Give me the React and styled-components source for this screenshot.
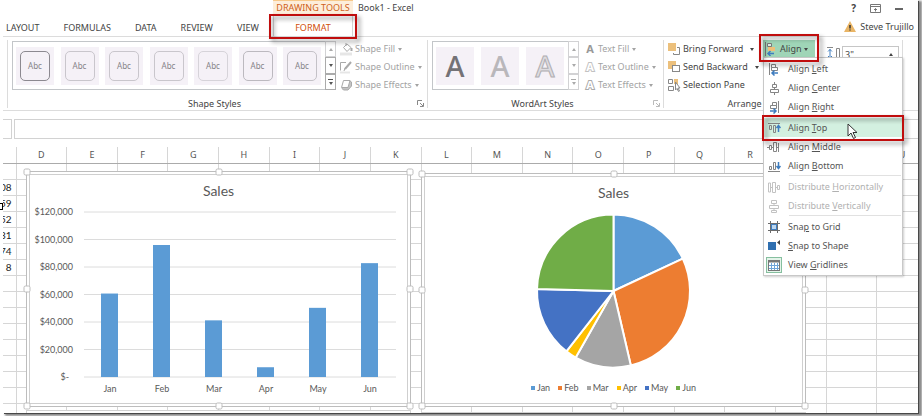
import React from 'react';
import styled, { createGlobalStyle, css } from 'styled-components';

// Data

const tabs = ['LAYOUT', 'FORMULAS', 'DATA', 'REVIEW', 'VIEW'];
const shapePresets = ['#8c8990', '#c9c6cc', '#c9c6cc', '#c9c6cc', '#d6d3d9', '#bcb9bf', '#c4c1c7'];
const columns = 'DEFGHIJKLMNOPQRSTU'.split('');
const rows = ['', '08', '59', '52', '31', '74', '8', '', '', '', '', '', '', '', '', ''];

const months = ['Jan', 'Feb', 'Mar', 'Apr', 'May', 'Jun'];
const sales = [60700, 96000, 41200, 7100, 50300, 82800];
const sliceEnds = [64.9, 166.9, 209.6, 218, 271.5, 360];
const palette = ['#5b9bd5', '#ed7d31', '#a5a5a5', '#ffc000', '#4472c4', '#70ad47'];

const menuItems = [
  { icon: 'left', text: ['Align ', 'L', 'eft'] },
  { icon: 'center', text: ['Align ', 'C', 'enter'] },
  { icon: 'right', text: ['Align ', 'R', 'ight'] },
  { icon: 'top', text: ['Align ', 'T', 'op'], split: true, active: true },
  { icon: 'middle', text: ['Align ', 'M', 'iddle'] },
  { icon: 'bottom', text: ['Align ', 'B', 'ottom'] },
  { icon: 'distH', text: ['Distribute ', 'H', 'orizontally'], split: true, disabled: true },
  { icon: 'distV', text: ['Distribute ', 'V', 'ertically'], disabled: true },
  { icon: 'grid', text: ['Sna', 'p', ' to Grid'], split: true },
  { icon: 'shape', text: ['', 'S', 'nap to Shape'] },
  { icon: 'lines', text: ['View ', 'G', 'ridlines'], checked: true },
];

// Icons

const gray = '#858585';
const blue = '#3f7dbf';

const glyphs = {
  left: (
    <g fill="none" stroke={gray}>
      <path d="M2.500 1v12M4.500 2.500h4v3h-4zM4.500 5.500h6v3h-6z" />
      <path d="M11 11H5m2.500-2.500L5 11l2.500 2.500" stroke={blue} strokeWidth="1.500" />
    </g>
  ),
  center: (
    <g fill="none" stroke={gray}>
      <path d="M7.500 1v2M7.500 6v2M7.500 12v2M5.500 3.500h4v3h-4zM3.500 8.500h8v3h-8z" />
    </g>
  ),
  right: (
    <g fill="none" stroke={gray}>
      <path d="M11.500 1v12M5.500 2.500h4v3h-4zM3.500 5.500h6v3h-6z" />
      <path d="M3 11h6M6.500 8.500L9 11l-2.500 2.500" stroke={blue} strokeWidth="1.500" />
    </g>
  ),
  top: (
    <g fill="none" stroke={gray}>
      <path d="M1 2.500h12M2.500 4.500h2v4h-2zM6.500 4.500h2v7h-2z" />
      <path d="M11.500 11V5M9.500 7l2-2.500 2 2.500" stroke={blue} strokeWidth="1.500" />
    </g>
  ),
  middle: (
    <g fill="none" stroke={gray}>
      <path d="M0 7.500h2M4.500 7.500h2M9.500 7.500h2M2.500 5.500h2v4h-2zM6.500 2.500h3v9h-3zM11.500 3v9" />
    </g>
  ),
  bottom: (
    <g fill="none" stroke={gray}>
      <path d="M1 12.500h12M2.500 7.500h2v3h-2zM6.500 3.500h2v7h-2z" />
      <path d="M11.500 3v6M9.500 7l2 2.500 2-2.500" stroke={blue} strokeWidth="1.500" />
    </g>
  ),
  distH: (
    <g fill="none" stroke="#c2c2c2">
      <path d="M1.500 3v9h2V3zM5.500 2.500h3v10h-3zM10.500 5.500h2v4h-2zM3 7.500h2M9 7.500h1" />
    </g>
  ),
  distV: (
    <g fill="none" stroke="#c2c2c2">
      <path d="M4.500 1.500h5v3h-5zM2.500 6.500h9v3h-9zM4.500 11.500h5v2h-5zM7 4.500v2M7 9.500v2" />
    </g>
  ),
  grid: (
    <g>
      <path d="M3.500 1v12M10.500 1v12M1 3.500h12M1 10.500h12" stroke="#6b6b6b" fill="none" />
      <rect x="4.500" y="4.500" width="5" height="5" fill="#bcd6ef" stroke={blue} />
    </g>
  ),
  shape: (
    <g>
      <rect x="1" y="3" width="8" height="8" fill="#2f6fb0" />
      <path d="M13 1v5l-3-2.500z" fill="#444" />
    </g>
  ),
  lines: (
    <g>
      <rect x="1.500" y="2.500" width="11" height="10" fill="#fff" stroke="#777" />
      <path d="M1 3.500h12" stroke="#777" strokeWidth="2" />
      <path d="M4.500 5v7M7.500 5v7M10.500 5v7M2 7.500h10M2 10.500h10" stroke="#6ea3d8" fill="none" />
    </g>
  ),
  align: (
    <g fill="none" stroke="#777">
      <path d="M1.500 0v14M3.500 1.500h4v3h-4z" fill="#dce9e0" />
      <path d="M4 5h7v4H4z" fill="#eebf79" stroke="none" />
      <path d="M10 11.500H4m2.500-2.500L4 11.500l2.500 2.500" stroke={blue} strokeWidth="1.500" />
    </g>
  ),
  forward: (
    <g>
      <path d="M9 5.500h2.500v7h-6V11" fill="none" stroke="#888" />
      <rect x="0" y="1" width="8" height="8" fill="#ecc07c" />
    </g>
  ),
  backward: (
    <g>
      <rect x="0" y="1" width="8" height="8" fill="#ecc07c" />
      <rect x="4.500" y="5.500" width="7" height="6" fill="#fff" stroke="#888" />
    </g>
  ),
  pane: (
    <g fill="none" stroke="#888">
      <path d="M.5 1.500h4v4h-4zM.5 8.500h5v4h-5z" />
      <path d="M6 1h4v5H6z" fill="#ecc07c" stroke="none" />
      <path d="M7.500 4v8l1.500-1.500 1.500 3 1-.5-1.500-3h2z" fill="#fff" />
    </g>
  ),
  fill: (
    <g fill="none" stroke="#a9a9a9">
      <path d="M3.500 5.500L7 2l4 3.500-4 4zM6 1v3" />
      <path d="M11.500 6v3" strokeWidth="2" />
      <path d="M0 12h12" strokeWidth="3" stroke="#e6e6e6" />
    </g>
  ),
  outline: (
    <g fill="none" stroke="#a9a9a9">
      <path d="M6 2.500H.5v8M4 11l1-3 6-6" />
      <path d="M5 9l6-7" strokeWidth="2" />
      <path d="M0 12.500h10" stroke="#e6e6e6" strokeWidth="2" />
    </g>
  ),
  effects: (
    <g fill="#c4c4c4" stroke="#a9a9a9">
      <path d="M2 10.500l1.500 1.500H8l3.500-4V4L10 3z" />
      <path d="M3.500 2.500H10L8 9.500H1.500z" fill="#fff" />
    </g>
  ),
  height: (
    <g fill="none" stroke="#888">
      <path d="M0 .5h6M0 12.500h6" />
      <path d="M3 2v9M1 4.500l2-2 2 2M1 9l2 2 2-2" stroke={blue} />
      <path d="M9.500 13V1.500h3V13" />
    </g>
  ),
};

const Icon = ({ name }) => (
  <svg width="14" height="14" viewBox="0 0 14 14" aria-hidden="true">{glyphs[name]}</svg>
);

const Launcher = ({ label }) => (
  <StyLauncher aria-label={label}>
    <svg width="7" height="7" viewBox="0 0 7 7">
      <path d="M.5 5V.5H5M3 3l3 3M6.500 3v3.500H3" fill="none" stroke="currentColor" />
    </svg>
  </StyLauncher>
);

const Scroller = ({ live }) => (
  <StyScroller>
    <StyStep aria-label="Previous row" $muted><StyCaret $up /></StyStep>
    <StyStep aria-label="Next row" $muted={!live} $framed={live}><StyCaret /></StyStep>
    <StyStep aria-label="More styles" $muted={!live} $framed={live}><StyBar /><StyCaret /></StyStep>
  </StyScroller>
);

const Command = ({ icon, letter, children, muted, arrow = true, wide }) => (
  <StyCommand $muted={muted} $wide={wide}>
    {letter ? <StyLetter $kind={letter}>A</StyLetter> : <Icon name={icon} />}
    <span>{children}</span>
    {arrow && <StyCaret />}
  </StyCommand>
);

// Charts

const handles = ['0 0', '50% 0', '100% 0', '0 50%', '100% 50%', '0 100%', '50% 100%', '100% 100%'];

const ChartObject = ({ title, low, children }) => (
  <StyChart $low={low}>
    <h2>{title}</h2>
    {children}
    {handles.map((at) => <StyHandle key={at} $at={at.split(' ')} />)}
  </StyChart>
);

const BarChart = () => {
  const base = 175;
  const step = 27.5;
  return (
    <StyPlot viewBox="0 0 379 196" role="img" aria-label="Sales by month, columns">
      {[0, 1, 2, 3, 4, 5, 6].map((n) => (
        <g key={n}>
          <line x1="55" x2="367" y1={base - n * step} y2={base - n * step} stroke="#dcdcdc" />
          <text x={n ? 44 : 40} y={base + 3 - n * step} textAnchor="end">
            {n ? `$${(n * 20000).toLocaleString('en-US')}` : '$-'}
          </text>
        </g>
      ))}
      {sales.map((value, n) => {
        const height = (value / 20000) * step;
        return (
          <g key={months[n]}>
            <rect x={72 + n * 52} y={base - height} width="17" height={height} fill={palette[0]} />
            <text x={81 + n * 52} y={base + 15} textAnchor="middle">{months[n]}</text>
          </g>
        );
      })}
    </StyPlot>
  );
};

const rim = (deg) => {
  const a = (deg * Math.PI) / 180;
  return `${189.5 + 76.5 * Math.sin(a)} ${87 - 76.5 * Math.cos(a)}`;
};

const PieChart = () => (
  <>
    <StyPlot viewBox="0 0 379 172" role="img" aria-label="Sales by month, pie">
      {sliceEnds.map((end, n) => {
        const start = n ? sliceEnds[n - 1] : 0;
        return (
          <path
            key={end}
            d={`M189.500 87L${rim(start)}A76.500 76.500 0 0 1 ${rim(end)}Z`}
            fill={palette[n]}
            stroke="#fff"
            strokeWidth="2"
            strokeLinejoin="round"
          />
        );
      })}
    </StyPlot>
    <StyLegend>
      {months.map((month, n) => <StyKey key={month} $color={palette[n]}>{month}</StyKey>)}
    </StyLegend>
  </>
);

const AlignMenu = () => (
  <StyMenu role="menu">
    {menuItems.map(({ icon, text, split, active, disabled, checked }) => (
      <React.Fragment key={icon}>
        {split && <StySplit />}
        <StyMenuItem role="menuitem" disabled={disabled} $active={active}>
          <StyMenuIcon $checked={checked}><Icon name={icon} /></StyMenuIcon>
          <span>{text[0]}<u>{text[1]}</u>{text[2]}</span>
          {active && (
            <StyPointer width="11" height="17" viewBox="0 0 11 17">
              <path d="M1 1v12l3-3 2.500 5.500 2-1L6 9.500h4z" fill="#fff" stroke="#333" />
            </StyPointer>
          )}
          {active && <StyCallout $x={-2} $y={-3} $bottom={-4} />}
        </StyMenuItem>
      </React.Fragment>
    ))}
  </StyMenu>
);

const App = () => (
  <StyPage>
    <Global />
    <StyWindow>
      <StyHeader>
        <span />
        <StyContext>DRAWING TOOLS</StyContext>
        <StyTitle>
          <h1>Book1 - Excel</h1>
          <StyControls>
            <button aria-label="Help"><b>?</b></button>
            <button aria-label="Ribbon display options">
              <svg width="11" height="9" viewBox="0 0 11 9">
                <path d="M.5.500h10v8H.5zM.5 2.500h10M5.500 7.500v-3M4 6l1.500-1.500L7 6" fill="none" stroke="#777" />
              </svg>
            </button>
            <button aria-label="Minimize">
              <svg width="8" height="9" viewBox="0 0 8 9"><path d="M0 5h8" stroke="#666" strokeWidth="2" /></svg>
            </button>
          </StyControls>
        </StyTitle>
        <StyTabs>
          {tabs.map((tab) => <button key={tab}>{tab}</button>)}
        </StyTabs>
        <StyFormatTab>
          FORMAT
          <StyCallout $x={-5} $y={-1} $bottom={-3} />
        </StyFormatTab>
        <StyUser>
          <svg width="12" height="11" viewBox="0 0 12 11">
            <path d="M6 0l6 11H0z" fill="#e9b566" />
            <path d="M6 4v3.500M6 8.500v1" stroke="#333" strokeWidth="1.500" />
          </svg>
          <span>Steve Trujillo</span>
        </StyUser>
      </StyHeader>

      <StyRibbon>
        <StyGroup $width={421}>
          <StyGroupBody>
            <StyGallery $width={324}>
              <StyPresets>
                {shapePresets.map((color, n) => (
                  <StyPreset key={n}><StyShape $color={color}>Abc</StyShape></StyPreset>
                ))}
              </StyPresets>
              <Scroller live />
            </StyGallery>
            <StyCommands>
              <Command icon="fill" muted>Shape Fill</Command>
              <Command icon="outline" muted>Shape Outline</Command>
              <Command icon="effects" muted>Shape Effects</Command>
            </StyCommands>
          </StyGroupBody>
          <StyGroupName><span>Shape Styles</span><Launcher label="Shape options" /></StyGroupName>
        </StyGroup>

        <StyGroup $width={236}>
          <StyGroupBody>
            <StyGallery $width={147}>
              <StyPresets>
                <StyPreset><StyWordArt $color="#747276">A</StyWordArt></StyPreset>
                <StyPreset><StyWordArt $color="#b9b7bb">A</StyWordArt></StyPreset>
                <StyPreset><StyWordArt $color="#dedce0" $edge="#b0aeb2">A</StyWordArt></StyPreset>
              </StyPresets>
              <Scroller />
            </StyGallery>
            <StyCommands>
              <Command letter="solid" muted>Text Fill</Command>
              <Command letter="soft" muted>Text Outline</Command>
              <Command letter="hollow" muted>Text Effects</Command>
            </StyCommands>
          </StyGroupBody>
          <StyGroupName $muted><span>WordArt Styles</span><Launcher label="WordArt options" /></StyGroupName>
        </StyGroup>

        <StyGroup $width={157} $plain>
          <StyGroupBody>
            <StyCommands>
              <Command icon="forward" wide>Bring Forward</Command>
              <Command icon="backward" wide>Send Backward</Command>
              <Command icon="pane" arrow={false}>Selection Pane</Command>
            </StyCommands>
            <StyAlign>
              <StyAlignButton aria-haspopup="menu" aria-expanded="true">
                <Icon name="align" />
                <span>Align</span>
                <StyCaret />
              </StyAlignButton>
              <AlignMenu />
              <StyCallout $x={-4} $y={-6} $bottom={-4} />
            </StyAlign>
          </StyGroupBody>
          <StyGroupName><span>Arrange</span></StyGroupName>
        </StyGroup>

        <StyGroup $width={82}>
          <StySize>
            <Icon name="height" />
            <input aria-label="Shape height" defaultValue={'3"'} />
            <StyCaret $up />
          </StySize>
        </StyGroup>
      </StyRibbon>

      <StyFormula>
        <StyNameBox />
        <input aria-label="Formula bar" />
      </StyFormula>

      <StySheet>
        <table>
          <thead>
            <tr><th />{columns.map((name) => <th key={name}>{name}</th>)}</tr>
          </thead>
          <tbody>
            {rows.map((value, n) => (
              <tr key={n}>
                <td><StyValue>{value}</StyValue></td>
                {columns.map((name) => <td key={name} />)}
              </tr>
            ))}
          </tbody>
        </table>
        <StyObjects>
          <ChartObject title="Sales"><BarChart /></ChartObject>
          <ChartObject title="Sales" low><PieChart /></ChartObject>
          <StyNextChart />
          <StyNextChart $low />
        </StyObjects>
      </StySheet>
    </StyWindow>
    <StyFillHandle />
  </StyPage>
);

// Styles

const Global = createGlobalStyle`
  * { box-sizing: border-box; }

  body {
    margin: 0;
    background: #fff;
    color: #444;
    font: 9px/12px "Noto Sans", "Open Sans", sans-serif;
  }

  button, input {
    margin: 0;
    padding: 0;
    border: 0;
    background: none;
    color: inherit;
    font: inherit;
  }

  h1, h2 { margin: 0; font-weight: 400; }

  svg { flex: none; display: block; }
`;

const StyPage = styled.div`
  position: relative;
  height: 100vh;
  padding: 0 4px 3px 3px;
  overflow: hidden;
`;

const StyWindow = styled.div`
  display: flex;
  flex-direction: column;
  height: 100%;
  background: #fff;
  box-shadow: 1px 1px 0 #484848, 3px 2px 2px 1px #8a8a8a;
  clip-path: inset(0 -4px -3px 0);
`;

const StyCallout = styled.span`
  position: absolute;
  z-index: 3;
  inset: ${(p) => `${p.$y}px ${p.$x}px ${p.$bottom}px ${p.$x}px`};
  border: 2px solid #c00d0d;
  filter: drop-shadow(3px 3px 2px #00000070);
  pointer-events: none;
`;

const StyHeader = styled.header`
  display: grid;
  grid-template-columns: 270px 80px 1fr;
  grid-template-rows: 15px 21px;
  border-bottom: 1px solid #dcdcdc;
`;

const StyContext = styled.span`
  border-top: 1px solid #f7c98b;
  background: #fdeedb;
  color: #cf5f1a;
  line-height: 13px;
  text-align: center;
  white-space: nowrap;
`;

const StyTitle = styled.div`
  display: flex;
  justify-content: space-between;
  padding: 1px 15px 0 5px;

  h1 {
    font-size: 9px;
    line-height: 13px;
  }
`;

const StyControls = styled.div`
  display: flex;
  align-items: center;
  gap: 14px;

  b { font-size: 10px; }
`;

const StyTabs = styled.nav`
  display: flex;
  align-items: center;
  gap: 24px;
  padding: 4px 0 0 3px;
`;

const StyFormatTab = styled.button`
  position: relative;
  padding-top: 4px;
  border: solid #d4d4d4;
  border-width: 0 1px;
  color: #d1500c;
`;

const StyUser = styled.div`
  display: flex;
  justify-content: flex-end;
  align-items: center;
  gap: 4px;
  padding: 2px 4px 0 0;
`;

const StyRibbon = styled.section`
  display: flex;
  height: 74px;
  padding: 3px 0 2px 4px;
  border-bottom: 1px solid #dcdcdc;
`;

const StyGroup = styled.div`
  display: flex;
  flex-direction: column;
  justify-content: space-between;
  width: ${(p) => p.$width}px;
  padding-left: 4px;
  border-right: ${(p) => (p.$plain ? '0' : '1px solid #dcdcdc')};

  &:first-child { border-left: 1px solid #dcdcdc; }
`;

const StyGroupBody = styled.div`
  display: flex;
  gap: 4px;
`;

const StyGroupName = styled.div`
  display: flex;
  align-items: center;
  line-height: 9px;
  white-space: nowrap;

  span {
    flex: 1;
    text-align: center;
  }

  button { color: ${(p) => (p.$muted ? '#bbb' : '#888')}; }
`;

const StyLauncher = styled.button`
  width: 7px;
  margin-right: 3px;
`;

const StyGallery = styled.div`
  display: flex;
  flex: none;
  width: ${(p) => p.$width}px;
  height: 49px;
  margin-top: 1px;
  border: 1px solid #c3c6c9;
`;

const StyPresets = styled.div`
  display: flex;
  flex: 1;
  justify-content: space-between;
  align-items: center;
  padding: 0 4px 0 3px;
`;

const StyPreset = styled.button`
  display: flex;
  justify-content: center;
  align-items: center;
  width: 38px;
  height: 38px;
  background: #f5f1f7;
`;

const StyShape = styled.span`
  width: 30px;
  height: 30px;
  border: 1px solid ${(p) => p.$color};
  border-radius: 5px;
  color: #858388;
  font-size: 8px;
  line-height: 28px;
`;

const StyWordArt = styled.span`
  color: ${(p) => p.$color};
  font-size: 29px;
  font-weight: 500;
  line-height: 38px;
  ${(p) => p.$edge && css`-webkit-text-stroke: 1px ${p.$edge};`}
`;

const StyScroller = styled.div`
  display: grid;
  grid-template-rows: 1fr 1fr 1fr;
  width: 11px;
  margin: -1px -1px -1px 0;
`;

const StyStep = styled.button`
  display: flex;
  flex-direction: column;
  justify-content: center;
  align-items: center;
  gap: 2px;
  border: 1px solid ${(p) => (p.$framed ? '#ababab' : '#d2d2d4')};
  color: ${(p) => (p.$muted ? '#aaa' : '#555')};
`;

const StyCaret = styled.i`
  flex: none;
  border: solid transparent;
  border-width: ${(p) => (p.$up ? '0 2px 3px' : '3px 2px 0')};
  border-${(p) => (p.$up ? 'bottom' : 'top')}-color: currentColor;
`;

const StyBar = styled.i`
  width: 5px;
  height: 1px;
  background: currentColor;
`;

const StyCommands = styled.div`
  display: flex;
  flex-direction: column;
  flex: none;
`;

const StyCommand = styled.button`
  display: flex;
  align-items: center;
  gap: 1px;
  height: 18px;
  color: ${(p) => (p.$muted ? '#a3a3a3' : '#444')};
  white-space: nowrap;

  ${StyCaret} { margin-left: ${(p) => (p.$wide ? 6 : 2)}px; }
`;

const StyLetter = styled.b`
  width: 14px;
  color: ${(p) => (p.$kind === 'solid' ? '#999' : '#fff')};
  font-size: 11px;
  text-align: center;
  ${(p) => p.$kind !== 'solid' && css`
    paint-order: stroke;
    -webkit-text-stroke: 2px ${p.$kind === 'soft' ? '#c2c2c2' : '#aaa'};
  `}
`;

const StyAlign = styled.div`
  position: relative;
  display: flex;
  height: 18px;
  margin-left: auto;
  margin-right: 6px;
`;

const StyAlignButton = styled.button`
  display: flex;
  align-items: center;
  gap: 2px;
  width: 52px;
  height: 18px;
  padding-left: 1px;
  background: #9fd5b7;
`;

const StyMenu = styled.div`
  position: absolute;
  z-index: 2;
  top: 17px;
  left: 0;
  width: 140px;
  padding: 1px 0;
  border: 1px solid #c8c8c8;
  background: #fff;
  box-shadow: 1px 1px 2px #0003;
`;

const StyMenuItem = styled.button`
  position: relative;
  display: flex;
  align-items: center;
  gap: 6px;
  width: 100%;
  height: 19px;
  padding-left: 2px;
  background: ${(p) => (p.$active ? '#d3f0e0' : 'none')};
  color: ${(p) => (p.disabled ? '#b1b1b1' : '#555')};

  u { text-underline-offset: 1px; }
`;

const StyMenuIcon = styled.span`
  display: flex;
  justify-content: center;
  align-items: center;
  width: 16px;
  height: 16px;
  border: 1px solid ${(p) => (p.$checked ? '#86bf9f' : 'transparent')};
  background: ${(p) => (p.$checked ? '#e4f4ea' : 'none')};
`;

const StySplit = styled.hr`
  height: 2px;
  margin: 0 1px 0 25px;
  border: 0;
  border-top: 1px solid #e1e1e1;
`;

const StyPointer = styled.svg`
  position: absolute;
  z-index: 4;
  top: 5px;
  left: 83px;
`;

const StySize = styled.label`
  display: flex;
  align-items: center;
  height: 16px;
  margin: 6px 3px 0 2px;

  input {
    flex: 1;
    min-width: 0;
    height: 16px;
    margin-left: 1px;
    padding-left: 2px;
    border: 1px solid #c6c6c6;
  }

  ${StyCaret} { margin-left: -10px; margin-right: 6px; }
`;

const StyFormula = styled.div`
  display: flex;
  gap: 2px;
  height: 36px;
  padding: 8px 0;

  input {
    flex: 1;
    border: 1px solid #d2d2d2;
    border-right: 0;
  }
`;

const StyNameBox = styled.span`
  width: 9px;
  border: 1px solid #d2d2d2;
  border-left: 0;
`;

const StySheet = styled.main`
  position: relative;
  flex: 1;
  min-height: 0;
  overflow: hidden;

  table {
    width: calc(100% + 10px);
    border-collapse: collapse;
    table-layout: fixed;
  }

  th, td {
    height: 16px;
    padding: 0;
    border-right: 1px solid #d6d6d6;
    border-bottom: 1px solid #d6d6d6;
  }

  th {
    border-bottom-color: #ababab;
    color: #555;
    font-size: 9px;
    font-weight: 400;
    line-height: 15px;
  }

  th:first-child { width: 13px; }
`;

const StyValue = styled.div`
  display: flex;
  justify-content: flex-end;
  height: 15px;
  padding-right: 4px;
  overflow: hidden;
  color: #222;
  font: 10px/15px Lato, sans-serif;
`;

// Floating objects over the cells
const StyObjects = styled.div`
  position: absolute;
  inset: 24px 112px 0 23px;
  display: grid;
  grid-template-columns: 1fr 1fr;
  align-content: start;
  column-gap: 10px;
  row-gap: 3px;
`;

const StyChart = styled.article`
  position: relative;
  min-height: 234px;
  margin-top: ${(p) => (p.$low ? 2 : 0)}px;
  padding: 9px 2px 0;
  border: 1px solid #bdbdbd;
  background: #fff;
  box-shadow: inset 0 0 0 2px #fff, inset 0 0 0 3px #cfcfcf;
  color: #595959;
  font: 9px/12px Lato, sans-serif;

  h2 {
    font-size: 14px;
    line-height: 20px;
    text-align: center;
  }
`;

const StyHandle = styled.i`
  position: absolute;
  left: ${(p) => p.$at[0]};
  top: ${(p) => p.$at[1]};
  width: 7px;
  height: 7px;
  border: 1px solid #bdbdbd;
  border-radius: 2px;
  background: #fff;
  translate: -50% -50%;
`;

const StyPlot = styled.svg`
  width: 100%;
  height: auto;
  margin-top: 1px;

  text { fill: #595959; }
`;

const StyLegend = styled.ul`
  display: flex;
  justify-content: center;
  gap: 8px;
  margin: 6px 0 0;
  padding: 0;
  list-style: none;
`;

const StyKey = styled.li`
  display: flex;
  align-items: center;
  gap: 2px;

  &::before {
    content: '';
    width: 4px;
    height: 4px;
    background: ${(p) => p.$color};
  }
`;

const StyNextChart = styled.div`
  height: 20px;
  margin-top: ${(p) => (p.$low ? 2 : 0)}px;
  border: 1px solid #d2d2d2;
  background: #fff;
`;

const StyFillHandle = styled.i`
  position: absolute;
  top: 203px;
  left: 0;
  width: 3px;
  height: 7px;
  border: 1px solid #000;
  border-left: 0;
`;

export default App;
